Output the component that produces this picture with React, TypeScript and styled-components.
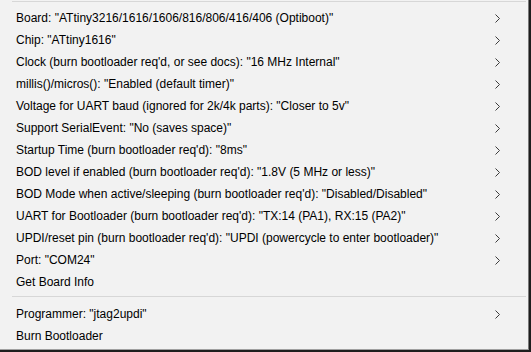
import styled, { createGlobalStyle } from "styled-components";

const GlobalStyle = createGlobalStyle`
  html, body {
    margin: 0;
    padding: 0;
    background: #1e1e1e;
    overflow: hidden;
  }
`;

const Screen = styled.div`
  width: 531px;
  height: 352px;
  display: flex;
  flex-direction: column;
  background: #1e1e1e;
`;

const Menu = styled.div`
  width: 528px;
  height: 348px;
  background: #f2f2f2;
  border-right: 1px solid #7a7a7a;
  border-bottom: 1px solid #a0a0a0;
  padding-top: 1px;
  box-sizing: content-box;
  font-family: "Liberation Sans", Arial, sans-serif;
  font-size: 12px;
  color: #000;
`;

const Separator = styled.div<{ top?: boolean }>`
  height: ${(p) => (p.top ? "6px" : "10px")};
  display: flex;
  flex-direction: column;
  padding-left: 12px;
  padding-right: 2px;
  &::before {
    content: "";
    display: block;
    margin-top: ${(p) => (p.top ? "0" : "3px")};
    height: 1px;
    background: #d7d7d7;
  }
`;

const Row = styled.div`
  height: 22px;
  display: flex;
  align-items: center;
  padding-left: 16px;
  padding-right: 28px;
`;

const Label = styled.span`
  flex: 1;
  white-space: nowrap;
`;

const Arrow = styled.svg`
  width: 5px;
  height: 9px;
  flex: none;
`;

const Console = styled.div`
  flex: 1;
  background: #1e1e1e;
`;

const items: { label: string; sub?: boolean }[] = [
  { label: 'Board: "ATtiny3216/1616/1606/816/806/416/406 (Optiboot)"', sub: true },
  { label: 'Chip: "ATtiny1616"', sub: true },
  { label: 'Clock (burn bootloader req\'d, or see docs): "16 MHz Internal"', sub: true },
  { label: 'millis()/micros(): "Enabled (default timer)"', sub: true },
  { label: 'Voltage for UART baud (ignored for 2k/4k parts): "Closer to 5v"', sub: true },
  { label: 'Support SerialEvent: "No (saves space)"', sub: true },
  { label: 'Startup Time (burn bootloader req\'d): "8ms"', sub: true },
  { label: 'BOD level if enabled (burn bootloader req\'d): "1.8V (5 MHz or less)"', sub: true },
  { label: 'BOD Mode when active/sleeping (burn bootloader req\'d): "Disabled/Disabled"', sub: true },
  { label: 'UART for Bootloader (burn bootloader req\'d): "TX:14 (PA1), RX:15 (PA2)"', sub: true },
  { label: 'UPDI/reset pin (burn bootloader req\'d): "UPDI (powercycle to enter bootloader)"', sub: true },
  { label: 'Port: "COM24"', sub: true },
  { label: "Get Board Info" },
];

const tools: { label: string; sub?: boolean }[] = [
  { label: 'Programmer: "jtag2updi"', sub: true },
  { label: "Burn Bootloader" },
];

function Chevron() {
  return (
    <Arrow viewBox="0 0 5 9">
      <path d="M0.5 0.5 L4.5 4.5 L0.5 8.5" fill="none" stroke="#3c3c3c" strokeWidth="1" />
    </Arrow>
  );
}

function MenuRow({ label, sub }: { label: string; sub?: boolean }) {
  return (
    <Row>
      <Label>{label}</Label>
      {sub ? <Chevron /> : null}
    </Row>
  );
}

export default function App() {
  return (
    <>
      <GlobalStyle />
      <Screen>
        <Menu>
          <Separator top />
          {items.map((it) => (
            <MenuRow key={it.label} {...it} />
          ))}
          <Separator />
          {tools.map((it) => (
            <MenuRow key={it.label} {...it} />
          ))}
        </Menu>
        <Console />
      </Screen>
    </>
  );
}
